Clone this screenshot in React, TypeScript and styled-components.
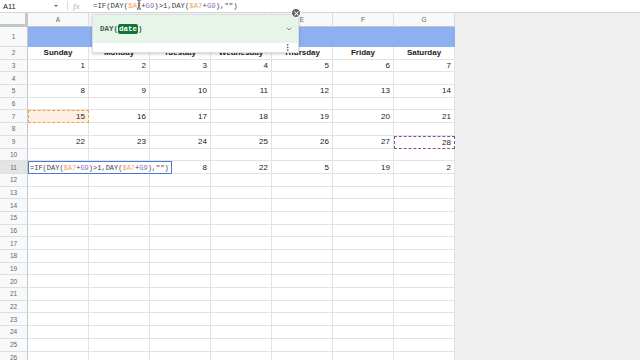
import React from 'react'
import styled, { createGlobalStyle, css } from 'styled-components'
import { ChevronDown, EllipsisVertical, X } from 'lucide-react'

const GlobalStyle = createGlobalStyle`
  html, body {
    margin: 0;
    padding: 0;
    background: #fff;
  }
  body {
    width: 640px;
    height: 360px;
    overflow: hidden;
    font-family: "Liberation Sans", Arial, sans-serif;
  }
`

const Page = styled.div`
  position: relative;
  width: 640px;
  height: 360px;
  overflow: hidden;
  display: flex;
  flex-direction: column;
`

const FormulaBar = styled.div`
  flex-shrink: 0;
  height: 13px;
  display: flex;
  align-items: center;
  border-bottom: 1px solid #d6d6d6;
  box-sizing: border-box;
  background: #fff;
`

const NameBox = styled.div`
  width: 68px;
  height: 10px;
  box-sizing: border-box;
  padding: 0 9px 0 3px;
  display: flex;
  align-items: center;
  justify-content: space-between;
  font-size: 7.5px;
  color: #202124;
  border-right: 1px solid #dadce0;
`

const Caret = styled.span`
  width: 0;
  height: 0;
  border-left: 2.5px solid transparent;
  border-right: 2.5px solid transparent;
  border-top: 2.5px solid #5f6368;
`

const Fx = styled.div`
  width: 20px;
  height: 10px;
  box-sizing: border-box;
  padding-left: 5px;
  display: flex;
  align-items: center;
  font-family: "Liberation Serif", serif;
  font-style: italic;
  font-size: 9px;
  color: #b0b0b0;
`

const FormulaText = styled.div<{ $size: number; $pad: number }>`
  position: relative;
  padding-left: ${p => p.$pad}px;
  font-family: "Liberation Mono", monospace;
  font-size: ${p => p.$size}px;
  color: #3c4043;
  white-space: pre;
`

const Ref = styled.span<{ $tone: 'orange' | 'purple' }>`
  color: ${p => (p.$tone === 'orange' ? '#f0a35e' : '#9b6cc4')};
`

const IBeam = styled.svg`
  position: absolute;
  left: 48px;
  top: -3px;
`

const Sheet = styled.div`
  flex: 1;
  display: flex;
  flex-direction: column;
  background: #efefef;
`

const Row = styled.div<{ $h: number }>`
  display: flex;
  flex-shrink: 0;
  height: ${p => p.$h}px;
`

const RowHead = styled.div<{ $active?: boolean }>`
  width: 28px;
  flex-shrink: 0;
  box-sizing: border-box;
  display: flex;
  align-items: center;
  justify-content: center;
  font-size: 6.5px;
  color: #666;
  background: ${p => (p.$active ? '#e3e4e6' : '#f8f9fa')};
  border-right: 1px solid #c4c7c5;
  border-bottom: 1px solid #e0e0e0;
`

const Corner = styled.div`
  width: 28px;
  flex-shrink: 0;
  box-sizing: border-box;
  background: #f8f9fa;
  border-right: 3px solid #c4c7c5;
  border-bottom: 3px solid #c4c7c5;
`

const ColHead = styled.div`
  width: 61px;
  flex-shrink: 0;
  box-sizing: border-box;
  display: flex;
  align-items: center;
  justify-content: center;
  font-size: 6.5px;
  color: #666;
  background: #f8f9fa;
  border-right: 1px solid #dadce0;
  border-bottom: 1px solid #c4c7c5;
`

const Cell = styled.div<{
  $bg?: string
  $bold?: boolean
  $mark?: 'orange' | 'purple'
}>`
  position: relative;
  width: 61px;
  flex-shrink: 0;
  box-sizing: border-box;
  display: flex;
  align-items: center;
  justify-content: ${p => (p.$bold ? 'center' : 'flex-end')};
  padding: 0 3px;
  font-size: 8px;
  font-weight: ${p => (p.$bold ? 700 : 400)};
  color: #1a1a1a;
  background: ${p => p.$bg || '#fff'};
  border-right: 1px solid ${p => p.$bg || '#e2e3e3'};
  border-bottom: 1px solid ${p => p.$bg || '#e2e3e3'};
  ${p =>
    p.$mark === 'orange' &&
    css`
      background: #fdf0e2;
      border: 1px dashed #f0a04f;
    `}
  ${p =>
    p.$mark === 'purple' &&
    css`
      border: 1px dashed #8e4b98;
    `}
`

const Filler = styled.div`
  flex: 1;
  background: #efefef;
`

const Editor = styled.div`
  position: absolute;
  left: 0;
  top: 0;
  z-index: 2;
  width: 144px;
  height: 13px;
  box-sizing: border-box;
  display: flex;
  align-items: center;
  background: #fff;
  border: 1.5px solid #4a7ad6;
`

const Popup = styled.div`
  position: absolute;
  left: 92px;
  top: 14px;
  z-index: 3;
  width: 205px;
  height: 37px;
  background: #fff;
  border: 1px solid #dedede;
  box-shadow: 0 1px 3px rgba(0, 0, 0, 0.2);
  display: flex;
  flex-direction: column;
`

const PopupHead = styled.div`
  height: 28px;
  display: flex;
  align-items: center;
  justify-content: space-between;
  padding: 0 5px 0 7px;
  background: #e6f4ea;
`

const PopupFoot = styled.div`
  flex: 1;
  display: flex;
  justify-content: flex-end;
  align-items: center;
  padding-right: 6px;
`

const Signature = styled.div`
  font-family: "Liberation Mono", monospace;
  font-size: 7.5px;
  font-weight: 700;
  color: #40634b;
  white-space: pre;
`

const Arg = styled.span`
  display: inline-block;
  padding: 1px 1px;
  border-radius: 2px;
  background: #137333;
  color: #fff;
`

const CloseBadge = styled.div`
  position: absolute;
  left: 291px;
  top: 8px;
  z-index: 4;
  width: 10px;
  height: 10px;
  border-radius: 50%;
  background: #5f6368;
  display: flex;
  align-items: center;
  justify-content: center;
  border: 1px solid #fff;
  box-sizing: border-box;
`

const COLS = ['A', 'B', 'C', 'D', 'E', 'F', 'G']
const DAYS = ['Sunday', 'Monday', 'Tuesday', 'Wednesday', 'Thursday', 'Friday', 'Saturday']

const weeks: Record<number, (number | string)[]> = {
  3: [1, 2, 3, 4, 5, 6, 7],
  5: [8, 9, 10, 11, 12, 13, 14],
  7: [15, 16, 17, 18, 19, 20, 21],
  9: [22, 23, 24, 25, 26, 27, 28],
  11: ['', '', 8, 22, 5, 19, 2],
}

const Formula: React.FC<{ size: number; pad: number; cursor?: boolean }> = ({ size, pad, cursor }) => (
  <FormulaText $size={size} $pad={pad}>
    =IF(DAY(<Ref $tone="orange">$A7</Ref>+<Ref $tone="purple">G9</Ref>)&gt;1,DAY(
    <Ref $tone="orange">$A7</Ref>+<Ref $tone="purple">G9</Ref>),"")
    {cursor && (
      <IBeam width="6" height="11" viewBox="0 0 6 11">
        <path d="M1 1h1.5M3.5 1H5M3 1.5v8M1 10h1.5M3.5 10H5" stroke="#222" strokeWidth="1" fill="none" />
      </IBeam>
    )}
  </FormulaText>
)

const markFor = (row: number, col: number): 'orange' | 'purple' | undefined => {
  if (row === 7 && col === 0) return 'orange'
  if (row === 9 && col === 6) return 'purple'
  return undefined
}

const App: React.FC = (): JSX.Element => {
  const rows = Array.from({ length: 25 }, (_, i) => i + 2)

  return (
    <Page>
      <GlobalStyle />
      <FormulaBar>
        <NameBox>
          A11
          <Caret />
        </NameBox>
        <Fx>fx</Fx>
        <Formula size={7.3} pad={5} cursor />
      </FormulaBar>

      <Sheet>
        <Row $h={14}>
          <Corner />
          {COLS.map(c => (
            <ColHead key={c}>{c}</ColHead>
          ))}
          <Filler />
        </Row>
        <Row $h={20}>
          <RowHead>1</RowHead>
          {COLS.map(c => (
            <Cell key={c} $bg="#8fb0ee" />
          ))}
          <Filler />
        </Row>
        {rows.map(r => (
          <Row key={r} $h={12.7}>
            <RowHead $active={r === 11}>{r}</RowHead>
            {COLS.map((c, i) => (
              <Cell key={c} $bold={r === 2} $mark={markFor(r, i)}>
                {r === 2 ? DAYS[i] : weeks[r]?.[i]}
                {r === 11 && i === 0 && (
                  <Editor>
                    <Formula size={7} pad={1} />
                  </Editor>
                )}
              </Cell>
            ))}
            <Filler />
          </Row>
        ))}
      </Sheet>

      <Popup>
        <PopupHead>
          <Signature>
            DAY(<Arg>date</Arg>)
          </Signature>
          <ChevronDown size={8} color="#5f6368" strokeWidth={2.2} />
        </PopupHead>
        <PopupFoot>
          <EllipsisVertical size={9} color="#5f6368" strokeWidth={2.5} />
        </PopupFoot>
      </Popup>
      <CloseBadge>
        <X size={7} color="#fff" strokeWidth={3.5} />
      </CloseBadge>
    </Page>
  )
}

export default App
